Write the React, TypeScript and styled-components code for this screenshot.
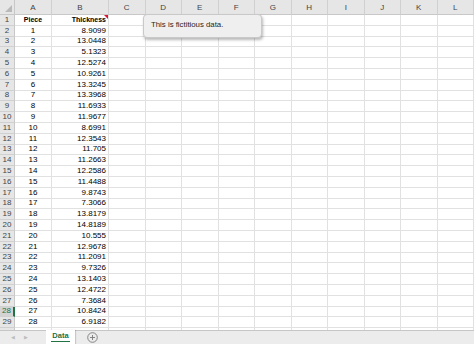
import React from "react";
import styled, { createGlobalStyle } from "styled-components";

const Global = createGlobalStyle`
  html, body { margin: 0; padding: 0; background: #ffffff; }
  body { font-family: "Liberation Sans", Arial, sans-serif; }
  * { box-sizing: border-box; }
`;

const COLS = ["A", "B", "C", "D", "E", "F", "G", "H", "I", "J", "K", "L"];
const VALUES = [
  "8.9099", "13.0448", "5.1323", "12.5274", "10.9261", "13.3245", "13.3968",
  "11.6933", "11.9677", "8.6991", "12.3543", "11.705", "11.2663", "12.2586",
  "11.4488", "9.8743", "7.3066", "13.8179", "14.8189", "10.555", "12.9678",
  "11.2091", "9.7326", "13.1403", "12.4722", "7.3684", "10.8424", "6.9182",
  "13.3533",
];
const SELECTED_ROW = 28;

const Window = styled.div`
  width: 474px;
  height: 344px;
  display: flex;
  flex-direction: column;
  overflow: hidden;
  position: relative;
  background: #ffffff;
`;

const SheetArea = styled.div`
  flex: 1;
  overflow: hidden;
  position: relative;
`;

const Grid = styled.div`
  display: grid;
  grid-template-columns: 15px 37px 57px repeat(10, 36.5px);
  grid-template-rows: 15px;
  grid-auto-rows: 10.8px;
`;

const Corner = styled.div`
  background: #e6e6e6;
  border-right: 1px solid #c8c8c8;
  border-bottom: 1px solid #c8c8c8;
  position: relative;
  &::after {
    content: "";
    position: absolute;
    right: 2px;
    bottom: 2px;
    width: 0;
    height: 0;
    border-left: 7px solid transparent;
    border-bottom: 7px solid #b9b9b9;
  }
`;

const ColHeader = styled.div`
  background: #e6e6e6;
  border-right: 1px solid #d0d0d0;
  border-bottom: 1px solid #c8c8c8;
  color: #444444;
  font-size: 8px;
  display: flex;
  align-items: center;
  justify-content: center;
  padding-top: 1px;
`;

const RowHeader = styled.div<{ $selected?: boolean }>`
  background: ${(p) => (p.$selected ? "#d3d3d3" : "#e6e6e6")};
  border-right: ${(p) => (p.$selected ? "2px solid #217346" : "1px solid #c8c8c8")};
  border-bottom: 1px solid #d0d0d0;
  color: ${(p) => (p.$selected ? "#217346" : "#444444")};
  font-size: 8px;
  display: flex;
  align-items: center;
  justify-content: center;
  line-height: 1;
`;

const Cell = styled.div<{ $align?: "left" | "center" | "right"; $bold?: boolean }>`
  border-right: 1px solid #e1e1e1;
  border-bottom: 1px solid #e1e1e1;
  font-size: ${(p) => (p.$bold ? "7px" : "8px")};
  color: #000000;
  font-weight: ${(p) => (p.$bold ? 700 : 400)};
  display: flex;
  align-items: center;
  justify-content: ${(p) =>
    p.$align === "center" ? "center" : p.$align === "right" ? "flex-end" : "flex-start"};
  padding: 0 2px;
  line-height: 1;
  white-space: nowrap;
  position: relative;
`;

const CommentMark = styled.span`
  position: absolute;
  top: 0;
  right: 0;
  width: 0;
  height: 0;
  border-left: 4px solid transparent;
  border-top: 4px solid #e0102f;
`;

const Comment = styled.div`
  position: absolute;
  left: 143px;
  top: 14px;
  width: 119px;
  height: 24px;
  background: #efefef;
  border: 1px solid #c9c9c9;
  border-radius: 4px;
  box-shadow: 1px 2px 3px rgba(0, 0, 0, 0.28);
  font-size: 7.8px;
  color: #1f1f1f;
  padding: 5px 0 0 7px;
`;

const TabBar = styled.div`
  height: 14px;
  flex: none;
  background: #ececec;
  border-top: 1px solid #c6c6c6;
  display: flex;
  align-items: stretch;
  padding-left: 11px;
`;

const NavArrows = styled.div`
  display: flex;
  align-items: center;
  gap: 9px;
  width: 35px;
  color: #bdbdbd;
  font-size: 4.5px;
`;

const Tab = styled.div`
  width: 29px;
  background: #ffffff;
  display: flex;
  flex-direction: column;
  align-items: center;
  justify-content: center;
  color: #217346;
  font-weight: 700;
  font-size: 7.5px;
  box-shadow: 1px 0 1px rgba(0, 0, 0, 0.15);
  margin-top: -1px;
`;

const TabLabel = styled.span`
  border-bottom: 1.5px solid #217346;
  padding: 0 1px 1px;
  line-height: 1;
`;

const AddButton = styled.div`
  display: flex;
  align-items: center;
  margin-left: 12px;
`;

export default function App() {
  const rows: { num: number; a?: string; b?: string; header?: boolean }[] = [
    { num: 1, a: "Piece", b: "Thickness", header: true },
    ...VALUES.map((v, i) => ({ num: i + 2, a: String(i + 1), b: v })),
  ];

  return (
    <>
      <Global />
      <Window>
        <SheetArea>
          <Grid>
            <Corner />
            {COLS.map((c) => (
              <ColHeader key={c}>{c}</ColHeader>
            ))}
            {rows.map((r) => (
              <React.Fragment key={r.num}>
                <RowHeader $selected={r.num === SELECTED_ROW}>{r.num}</RowHeader>
                <Cell $align="center" $bold={r.header}>
                  {r.a}
                </Cell>
                <Cell $align="right" $bold={r.header}>
                  {r.b}
                  {r.header && <CommentMark />}
                </Cell>
                {COLS.slice(2).map((c) => (
                  <Cell key={c} />
                ))}
              </React.Fragment>
            ))}
          </Grid>
          <Comment>This is fictitious data.</Comment>
        </SheetArea>
        <TabBar>
          <NavArrows>
            <span>◀</span>
            <span>▶</span>
          </NavArrows>
          <Tab>
            <TabLabel>Data</TabLabel>
          </Tab>
          <AddButton>
            <svg width="11" height="11" viewBox="0 0 11 11">
              <circle cx="5.5" cy="5.5" r="4.8" fill="none" stroke="#7a7a7a" strokeWidth="0.9" />
              <path d="M5.5 3v5M3 5.5h5" stroke="#7a7a7a" strokeWidth="0.9" />
            </svg>
          </AddButton>
        </TabBar>
      </Window>
    </>
  );
}
